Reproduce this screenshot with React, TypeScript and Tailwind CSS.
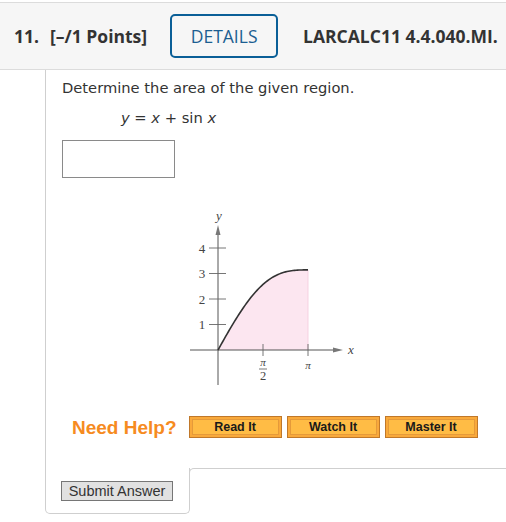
import React from "react";

function Graph() {
  const ox = 33;
  const oy = 145;
  const ux = 90 / Math.PI;
  const uy = 25.5;
  const pts: string[] = [];
  const N = 60;
  for (let i = 0; i <= N; i++) {
    const t = (Math.PI * i) / N;
    const X = ox + t * ux;
    const Y = oy - (t + Math.sin(t)) * uy;
    pts.push(`${X.toFixed(2)},${Y.toFixed(2)}`);
  }
  const curve = "M" + pts.join(" L");
  const endX = ox + Math.PI * ux;
  const fill = curve + ` L${endX.toFixed(2)},${oy} Z`;
  const serif = { fontFamily: '"Liberation Serif", "Times New Roman", serif' };
  return (
    <svg width="180" height="185" viewBox="0 0 180 185" className="block">
      <path d={fill} fill="#fce6f0" />
      <line x1={endX} y1={oy - Math.PI * uy} x2={endX} y2={oy} stroke="#f4c9dc" strokeWidth="0.8" />
      <line x1={ox} y1={180} x2={ox} y2={28} stroke="#555" strokeWidth="1" />
      <polygon points={`${ox},20 ${ox - 2.5},30 ${ox + 2.5},30`} fill="#777" />
      <line x1={5} y1={oy} x2={150} y2={oy} stroke="#555" strokeWidth="1" />
      <polygon points={`158,${oy} 148,${oy - 2.5} 148,${oy + 2.5}`} fill="#777" />
      {[1, 2, 3, 4].map((k) => (
        <g key={k}>
          <line x1={ox - 9} y1={oy - k * uy} x2={ox + 8} y2={oy - k * uy} stroke="#666" strokeWidth="0.9" />
          <text x={ox - 16} y={oy - k * uy + 4.5} fontSize="13" textAnchor="middle" fill="#444" style={serif}>
            {k}
          </text>
        </g>
      ))}
      <line x1={ox + 45} y1={oy - 6} x2={ox + 45} y2={oy + 6} stroke="#666" strokeWidth="0.9" />
      <line x1={endX} y1={oy - 6} x2={endX} y2={oy + 6} stroke="#666" strokeWidth="0.9" />
      <text x={ox + 45} y={oy + 16} fontSize="11" textAnchor="middle" fill="#444" fontStyle="italic" style={serif}>
        π
      </text>
      <line x1={ox + 41} y1={oy + 19} x2={ox + 49} y2={oy + 19} stroke="#555" strokeWidth="0.8" />
      <text x={ox + 45} y={oy + 30} fontSize="12.5" textAnchor="middle" fill="#444" style={serif}>
        2
      </text>
      <text x={endX} y={oy + 19} fontSize="11" textAnchor="middle" fill="#444" fontStyle="italic" style={serif}>
        π
      </text>
      <text x={ox + 1} y={15} fontSize="13" textAnchor="middle" fill="#444" fontStyle="italic" style={serif}>
        y
      </text>
      <text x={166} y={oy + 3.5} fontSize="13" textAnchor="middle" fill="#444" fontStyle="italic" style={serif}>
        x
      </text>
      <path d={curve} fill="none" stroke="#333" strokeWidth="1.6" />
    </svg>
  );
}

function HelpButton({ label }: { label: string }) {
  return (
    <div className="w-[93px] h-[22px] border border-[#c0782a] bg-[#f9a93b] p-[2px] box-border">
      <div className="h-full w-full border border-[#e59a3a] bg-[#ffbc45] flex items-center justify-center text-[12.5px] font-bold text-[#1a1a1a] leading-none font-['Liberation_Sans',Arial,sans-serif]">
        {label}
      </div>
    </div>
  );
}

export default function App() {
  return (
    <div className="w-[506px] h-[522px] bg-white overflow-hidden">
      <div className="mt-[2px] h-[68px] border-t border-b border-[#dcdcdc] bg-[#f6f6f6] flex items-center pl-[14px] font-['Open_Sans',sans-serif] text-[17.5px] text-[#333] whitespace-nowrap">
        <span className="font-bold">11.</span>
        <span className="font-bold ml-[11px]">[–/1 Points]</span>
        <div className="ml-[23px] shrink-0 w-[108px] h-[44px] border-2 border-[#0a5f97] rounded-[5px] flex items-center justify-center text-[#1b5e91] font-medium">
          DETAILS
        </div>
        <span className="font-bold ml-[25px]">LARCALC11 4.4.040.MI.</span>
      </div>

      <div className="ml-[45px] border-l border-[#cfcfcf] pl-[16px] pt-[8px] h-[398px] font-['DejaVu_Sans',Verdana,sans-serif] text-[#333]">
        <div className="text-[14.7px] leading-[20px]">Determine the area of the given region.</div>
        <div className="text-[14.7px] leading-[20px] mt-[10px] ml-[59px]">
          <i>y</i> = <i>x</i> + sin <i>x</i>
        </div>
        <div className="mt-[12px] w-[113px] h-[38px] border border-[#8a8a8a] bg-white" />
        <div className="mt-[27px] ml-[123px]">
          <Graph />
        </div>
        <div className="mt-[26px] flex items-center">
          <span className="ml-[10px] text-[19px] font-bold text-[#f68b1f] font-['Liberation_Sans',Arial,sans-serif] leading-none">
            Need Help?
          </span>
          <div className="ml-[12px] flex gap-[5px]">
            <HelpButton label="Read It" />
            <HelpButton label="Watch It" />
            <HelpButton label="Master It" />
          </div>
        </div>
      </div>

      <div className="flex items-start">
        <div className="ml-[45px] w-[145px] h-[46px] border-l border-b border-r border-[#cfcfcf] rounded-b-[5px] pl-[15px] pt-[13px] box-border">
          <div className="w-[112px] h-[20px] border border-[#767676] bg-[#e1e1e1] flex items-center justify-center text-[14.5px] text-[#333] leading-none font-['Liberation_Sans',Arial,sans-serif]">
            Submit Answer
          </div>
        </div>
        <div className="-ml-[1px] flex-1 h-[6px] border-t border-l border-[#cfcfcf] rounded-tl-[5px]" />
      </div>
    </div>
  );
}
